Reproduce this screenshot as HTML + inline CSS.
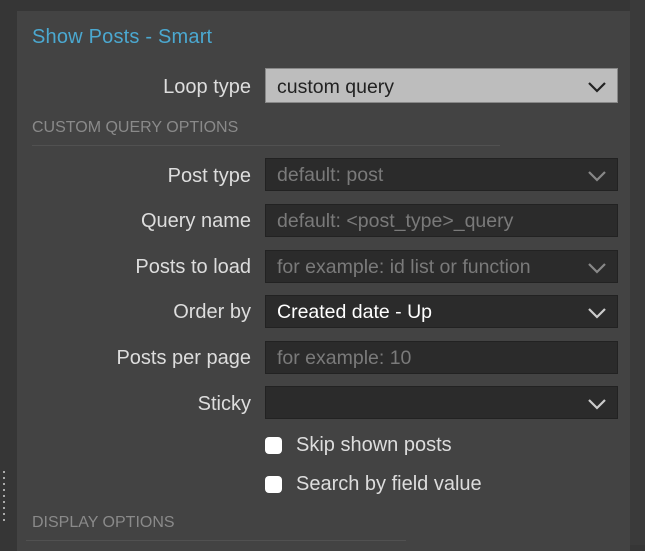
<html><head><style>
body{margin:0;width:645px;height:545px;background:#363636;font-family:"Liberation Sans",sans-serif;position:relative;overflow:hidden}
.panel{position:absolute;left:17px;top:11px;width:613px;height:540px;background:#434343}
.strip{position:absolute;left:630px;top:0;width:15px;height:545px;background:#3a3a3a}
.t{position:absolute;left:32px;top:26px;color:#4ba8d0;font-size:20px;letter-spacing:0.2px}
.lbl{position:absolute;right:394px;color:#ddd;font-size:20px;text-align:right;white-space:nowrap}
.in{position:absolute;left:265px;background:#2b2b2b;border:1px solid #222;color:#7a7a7a;font-size:19.5px;line-height:33px;padding-left:11px;box-sizing:border-box;width:353px;height:33px;white-space:nowrap}
.in svg{position:absolute;right:11px;top:11px}
.sec{position:absolute;left:32px;color:#8a8a8a;font-size:16px}
.hr{position:absolute;left:32px;width:468px;height:1px;background:#515151}
.cb{position:absolute;left:265px;width:17px;height:17px;background:#fff;border-radius:4px}
.ct{position:absolute;left:296px;color:#ddd;font-size:20px}
.dot{position:absolute;left:3px;width:2px;height:2px;background:#aaa}
</style></head><body>
<div class="panel"></div><div class="strip"></div>
<div class="t">Show Posts - Smart</div>
<div class="lbl" style="top:76px">Loop type</div>
<div class="in" style="top:68px;background:#bdbdbd;border-color:#888;color:#222;height:35px;line-height:37px">custom query<svg width="18" height="12" style="top:12px"><path d="M1 2l8 8 8-8" stroke="#222" stroke-width="2.2" fill="none"/></svg></div>
<div class="sec" style="top:119px">CUSTOM QUERY OPTIONS</div>
<div class="hr" style="top:145px"></div>
<div class="lbl" style="top:165px">Post type</div>
<div class="in" style="top:158px">default: post<svg width="18" height="12"><path d="M1 2l8 8 8-8" stroke="#888" stroke-width="2.2" fill="none"/></svg></div>
<div class="lbl" style="top:210px">Query name</div>
<div class="in" style="top:204px">default: &lt;post_type&gt;_query</div>
<div class="lbl" style="top:256px">Posts to load</div>
<div class="in" style="top:250px">for example: id list or function<svg width="18" height="12"><path d="M1 2l8 8 8-8" stroke="#888" stroke-width="2.2" fill="none"/></svg></div>
<div class="lbl" style="top:301px">Order by</div>
<div class="in" style="top:295px;color:#fff">Created date - Up<svg width="18" height="12"><path d="M1 2l8 8 8-8" stroke="#ccc" stroke-width="2.2" fill="none"/></svg></div>
<div class="lbl" style="top:347px">Posts per page</div>
<div class="in" style="top:341px">for example: 10</div>
<div class="lbl" style="top:393px">Sticky</div>
<div class="in" style="top:386px"><svg width="18" height="12"><path d="M1 2l8 8 8-8" stroke="#ccc" stroke-width="2.2" fill="none"/></svg></div>
<div class="cb" style="top:437px"></div><div class="ct" style="top:434px">Skip shown posts</div>
<div class="cb" style="top:476px"></div><div class="ct" style="top:473px">Search by field value</div>
<div class="sec" style="top:514px">DISPLAY OPTIONS</div>
<div class="hr" style="top:540px;left:26px;width:380px"></div>
<div class="dot" style="top:471px"></div><div class="dot" style="top:477px"></div><div class="dot" style="top:483px"></div><div class="dot" style="top:489px"></div><div class="dot" style="top:495px"></div><div class="dot" style="top:501px"></div><div class="dot" style="top:507px"></div><div class="dot" style="top:513px"></div><div class="dot" style="top:519px"></div>
</body></html>
